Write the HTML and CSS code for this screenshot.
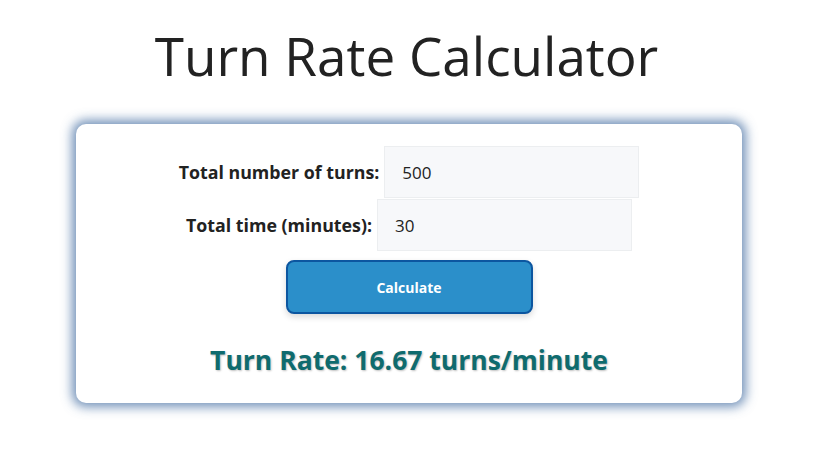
FILE: index.html
```html
<!DOCTYPE html>
<html lang="en">
<head>
    <meta charset="UTF-8">
    <meta name="viewport" content="width=device-width, initial-scale=1.0">
    <title>Turn Rate Calculator</title>
    <link rel="stylesheet" href="styles.css">
</head>
<body>
    <h1 class="title">Turn Rate Calculator</h1>
    <div class="calculator">
        <div class="row">
            <label for="turns">Total number of turns:</label>
            <input type="number" id="turns" value="500">
        </div>
        <div class="row">
            <label for="time">Total time (minutes):</label>
            <input type="number" id="time" value="30">
        </div>
        <button class="calc-btn" onclick="calculate()">Calculate</button>
        <div class="result" id="result">Turn Rate: 16.67 turns/minute</div>
    </div>

<script>
    function calculate() {
        var turns = parseFloat(document.getElementById('turns').value);
        var time = parseFloat(document.getElementById('time').value);
        if (isNaN(turns) || isNaN(time) || time <= 0) {
            document.getElementById('result').textContent = 'Please enter valid numbers';
            return;
        }
        document.getElementById('result').textContent = 'Turn Rate: ' + (turns / time).toFixed(2) + ' turns/minute';
    }
</script>
</body>
</html>
```

FILE: styles.css
```css
body {
    font-family: 'Open Sans', 'Noto Sans', sans-serif;
    margin: 0;
    padding-bottom: 40px;
    background-color: #fff;
    color: #222;
}

.title {
    margin: 21px 0 0;
    text-align: center;
    font-size: 53px;
    font-weight: 400;
    line-height: 70px;
    color: #222;
}

.calculator {
    width: 666px;
    height: 279px;
    box-sizing: border-box;
    margin: 33px auto 0 76px;
    padding: 22px 0 0;
    background-color: #fff;
    border-radius: 10px;
    box-shadow: 0 0 11px 4px rgba(55, 100, 155, 0.7);
    display: flex;
    flex-direction: column;
    align-items: center;
}

.row {
    display: flex;
    align-items: center;
    gap: 5px;
    margin-bottom: 1px;
}

.row label {
    font-size: 17.8px;
    font-weight: 700;
    color: #222;
}

.row input {
    width: 255px;
    height: 52px;
    box-sizing: border-box;
    padding: 0 17px;
    font-family: 'Open Sans', 'Noto Sans', sans-serif;
    font-size: 17px;
    color: #222;
    background-color: #f7f8fa;
    border: 1px solid #eceef0;
    outline: none;
}

.calc-btn {
    width: 247px;
    height: 54px;
    margin-top: 8px;
    font-family: 'Open Sans', 'Noto Sans', sans-serif;
    font-size: 14px;
    font-weight: 700;
    color: #fff;
    background-color: #2b8fca;
    border: 2px solid #0c56a0;
    border-radius: 8px;
    box-shadow: 0 3px 6px rgba(0, 0, 0, 0.15);
    cursor: pointer;
}

.result {
    margin-top: 28px;
    font-size: 26.5px;
    font-weight: 700;
    color: #0f6b6e;
    text-shadow: 1px 1px 2px rgba(0, 0, 0, 0.25);
}
```
